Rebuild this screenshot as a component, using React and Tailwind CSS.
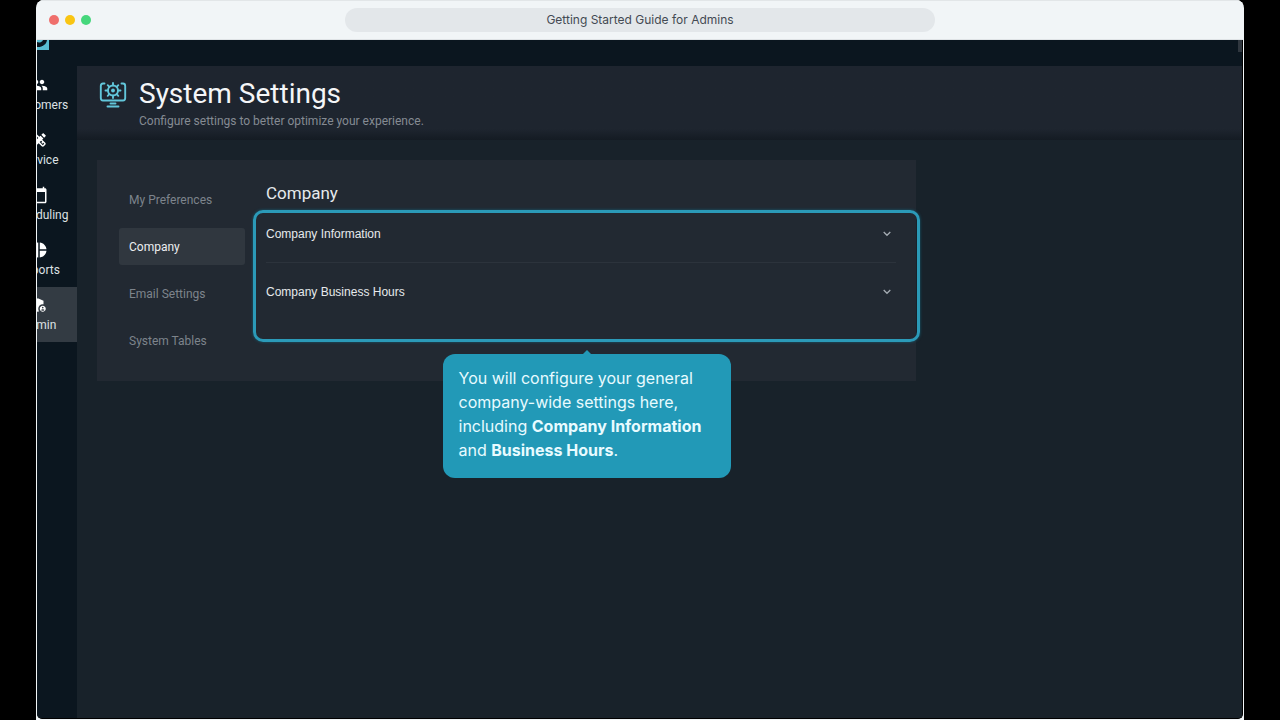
import {
  MdPeople,
  MdDesignServices,
  MdCalendarToday,
  MdPieChart,
  MdAdminPanelSettings,
} from "react-icons/md";

const modules = [
  { label: "Customers", Icon: MdPeople },
  { label: "Service", Icon: MdDesignServices },
  { label: "Scheduling", Icon: MdCalendarToday },
  { label: "Reports", Icon: MdPieChart },
  { label: "Admin", Icon: MdAdminPanelSettings, active: true },
];

const sections = ["My Preferences", "Company", "Email Settings", "System Tables"];

function SystemIcon() {
  return (
    <svg
      viewBox="0 0 28 28"
      className="size-7 shrink-0"
      fill="none"
      stroke="#62c6da"
      strokeWidth="1.9"
      strokeLinecap="round"
      aria-hidden="true"
    >
      <path d="M5.500 2.500H4Q1.800 2.500 1.800 5v12Q1.800 19.500 4 19.500h20q2.200 0 2.200-2.500V5q0-2.500-2.200-2.500h-1.500" />
      <path d="M11.500 22.500h5M8.500 25.500h11" />
      <circle cx="14" cy="9.500" r="5" />
      <circle cx="14" cy="9.500" r="1.900" fill="#62c6da" stroke="none" />
      <path d="M14 4.300V2M14 14.700V17M8.800 9.500H6.500M19.200 9.500h2.300M10.400 5.900 8.700 4.200M17.600 5.900l1.700-1.700M10.400 13.100l-1.700 1.700M17.600 13.100l1.700 1.700" />
    </svg>
  );
}

function Chevron() {
  return (
    <svg
      viewBox="0 0 8 6"
      className="h-[6px] w-2"
      fill="none"
      stroke="#a4abb2"
      strokeWidth="1.300"
      aria-hidden="true"
    >
      <path d="M.7 1 4 4.300 7.300 1" />
    </svg>
  );
}

function TitleBar() {
  return (
    <header className="grid h-10 grid-cols-[1fr_49%_1fr] items-center border-y border-t-[#e2e6e8] border-b-[#dfe3e6] bg-[#f1f5f7]">
      <div className="flex gap-[6px] pl-3">
        <span className="size-[10px] rounded-full bg-[#ef6f6c]" />
        <span className="size-[10px] rounded-full bg-[#f9c513]" />
        <span className="size-[10px] rounded-full bg-[#45d77c]" />
      </div>
      <div className="flex h-6 items-center justify-center rounded-full bg-[#e3e7ea] text-[12px] text-[#434a53]">
        Getting Started Guide for Admins
      </div>
    </header>
  );
}

function Sidebar() {
  return (
    <nav
      aria-label="Modules"
      className="flex w-10 shrink-0 flex-col items-end overflow-hidden bg-[#0b161f] font-[Roboto,sans-serif] text-[12px] text-[#dde1e4]"
    >
      <div className="flex h-[27px] w-[76px] justify-center">
        <svg viewBox="0 0 20 10" className="h-[10px] w-5" aria-hidden="true">
          <path d="M0 0H20V10H0z" fill="#58bdd2" />
          <path d="M0 0H18A9 7.500 0 0 1 3 5z" fill="#0b161f" />
          <path d="M8 0h6a4 3 0 0 1-6 2z" fill="#58bdd2" />
        </svg>
      </div>
      {modules.map(({ label, Icon, active }) => (
        <a
          key={label}
          href="#"
          className={
            active
              ? "flex h-[55px] w-[76px] shrink-0 flex-col items-center justify-center gap-[2px] bg-[#333b43]"
              : "flex h-[55px] w-[76px] shrink-0 flex-col items-center justify-center gap-[2px]"
          }
        >
          <Icon className="size-[18px] text-white" aria-hidden="true" />
          <span className="leading-[18px]">{label}</span>
        </a>
      ))}
    </nav>
  );
}

function PageHeader() {
  return (
    <div className="bg-linear-to-b from-[#1e252f] from-85% to-[#141b23] pb-[10px] pl-[22px] pt-[10px] font-[Roboto,sans-serif]">
      <div className="flex gap-3">
        <div className="pt-[5px]">
          <SystemIcon />
        </div>
        <div>
          <h1 className="text-[28px] leading-[36px] text-[#f4f6f8]">System Settings</h1>
          <p className="text-[12px] leading-[18px] text-[#858b93]">
            Configure settings to better optimize your experience.
          </p>
        </div>
      </div>
    </div>
  );
}

function SettingsCard() {
  return (
    <section className="relative flex w-[819px] max-w-full gap-[21px] bg-[#222932] pb-[22px] pl-[22px] pr-5 pt-[21px] font-[Roboto,sans-serif]">
      <div className="flex w-[126px] shrink-0 flex-col gap-[10px]">
        {sections.map((name) => (
          <button
            key={name}
            type="button"
            className={
              name === "Company"
                ? "h-[37px] rounded-[3px] bg-[#30373f] pl-[10px] text-left text-[12px] text-[#eceef0]"
                : "h-[37px] rounded-[3px] pl-[10px] text-left text-[12px] text-[#7d848c]"
            }
          >
            {name}
          </button>
        ))}
      </div>
      <div className="min-w-0 flex-1 text-[#e6e9ec]">
        <h2 className="text-[17px] leading-[24px]">Company</h2>
        <div className="flex flex-col divide-y divide-[#2c333c] font-['Liberation_Sans',sans-serif] text-[12px]">
          <button type="button" className="flex h-[58px] items-center justify-between pr-[5px]">
            Company Information
            <Chevron />
          </button>
          <button type="button" className="flex h-[58px] items-center justify-between pr-[5px]">
            Company Business Hours
            <Chevron />
          </button>
        </div>
      </div>
      <div className="pointer-events-none absolute -right-1 bottom-[39px] left-[156px] top-[50px] rounded-[10px] border-3 border-[#2b9ab8] shadow-[0_0_3px_#145f75]">
        <div
          role="tooltip"
          className="absolute left-1/2 top-full mt-[15px] w-72 -translate-x-1/2 rounded-xl bg-[#2299b7] px-4 pb-4 pt-3 font-[Inter,sans-serif] text-[16px] leading-[24px] text-[#e8fbff]"
        >
          <span className="absolute -top-1 left-1/2 -translate-x-1/2">
            <svg viewBox="0 0 10 5" className="h-[5px] w-[10px]" aria-hidden="true">
              <path d="M0 5 5 0l5 5z" fill="#2299b7" />
            </svg>
          </span>
          You will configure your general company-wide settings here, including{" "}
          <strong className="font-bold">Company Information</strong> and{" "}
          <strong className="font-bold">Business Hours</strong>.
        </div>
      </div>
    </section>
  );
}

export default function App() {
  return (
    <div className="min-h-screen bg-black px-9 font-[Inter,sans-serif]">
      <div className="flex min-h-screen flex-col overflow-hidden rounded-t-lg bg-[#f1f5f7] px-px pb-px">
        <TitleBar />
        <div className="flex flex-1 overflow-hidden rounded-b-[5px] border-b border-r border-black bg-[#18222a]">
          <Sidebar />
          <main className="min-w-0 flex-1">
            <div className="flex h-[26px] justify-end bg-[#0b161f]">
              <span className="h-3 w-1 bg-[#30373f]" />
            </div>
            <PageHeader />
            <div className="px-5 pt-5">
              <SettingsCard />
            </div>
          </main>
        </div>
      </div>
    </div>
  );
}
